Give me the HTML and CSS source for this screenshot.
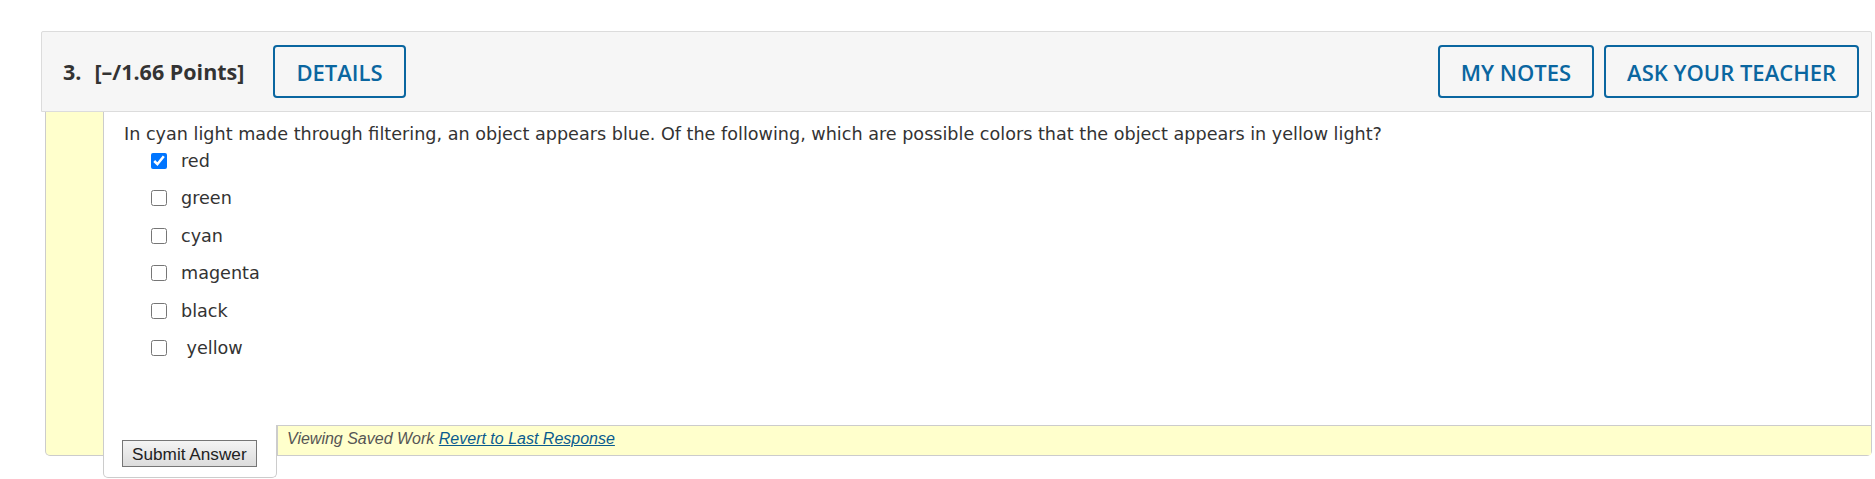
FILE: index.html
```html
<!DOCTYPE html>
<html>
<head>
<meta charset="utf-8">
<link rel="stylesheet" href="styles.css">
</head>
<body>
<div class="question">
  <div class="q-header">
    <div class="q-title"><span class="q-num">3.</span><span class="q-points">[–/1.66 Points]</span></div>
    <button class="hbtn details">DETAILS</button>
    <div class="spacer"></div>
    <button class="hbtn">MY NOTES</button>
    <button class="hbtn">ASK YOUR TEACHER</button>
  </div>
  <div class="q-body">
    <div class="gutter"></div>
    <div class="main">
      <div class="content">
        <p class="prompt">In cyan light made through filtering, an object appears blue. Of the following, which are possible colors that the object appears in yellow light?</p>
        <ul class="choices">
          <li><input type="checkbox" checked><span>red</span></li>
          <li><input type="checkbox"><span>green</span></li>
          <li><input type="checkbox"><span>cyan</span></li>
          <li><input type="checkbox"><span>magenta</span></li>
          <li><input type="checkbox"><span>black</span></li>
          <li><input type="checkbox"><span>&nbsp;yellow</span></li>
        </ul>
      </div>
      <div class="footer">
        <div class="submit-cell"><button class="submit">Submit Answer</button></div>
        <div class="saved-bar"><em>Viewing Saved Work</em> <a href="#">Revert to Last Response</a></div>
      </div>
    </div>
  </div>
</div>
</body>
</html>
```
FILE: styles.css
```css
html, body { margin: 0; padding: 0; background: #fff; }
body { padding: 31px 3px 40px 41px; min-height: 479px; box-sizing: border-box; }
.question { width: 1831px; }
.q-header {
  box-sizing: border-box;
  height: 81px;
  background: #f6f6f6;
  border: 1px solid #dcdcdc;
  border-radius: 2px 2px 0 0;
  display: flex;
  align-items: center;
  padding: 0 12px 0 21px;
  font-family: "Open Sans", sans-serif;
}
.q-title { font-size: 21.5px; font-weight: 700; color: #333; display: flex; gap: 13px; }
.spacer { flex: 1; }
.hbtn {
  box-sizing: border-box;
  height: 53px;
  padding: 0 21px;
  background: #f6f6f6;
  border: 2px solid #0a66a0;
  border-radius: 4px;
  color: #0a66a0;
  font-family: "Open Sans", sans-serif;
  font-size: 22px;
  font-weight: 600;
  margin-left: 10px;
}
.details { margin-left: 29px; }
.q-body {
  margin-left: 4px;
  display: flex;
  background: #ffffcc;
  border: 1px solid #cccccc;
  border-top: none;
  border-radius: 0 0 5px 5px;
  height: 344px;
  box-sizing: border-box;
}
.gutter { width: 57px; flex: none; }
.main { flex: 1; display: flex; flex-direction: column; }
.content {
  flex: 1;
  background: #fff;
  border-left: 1px solid #cccccc;
  padding: 11px 20px 0 20px;
  font-family: "DejaVu Sans", Verdana, sans-serif;
  font-size: 17.6px;
  color: #333;
}
.prompt { margin: 0; line-height: 22px; }
.choices { list-style: none; margin: 0; padding: 0 0 0 27px; }
.choices li { display: flex; align-items: center; height: 37.5px; }
.choices li:first-child { margin-top: -3px; }
.choices input { width: 16px; height: 16px; margin: 0 14px 0 0; }
.footer { display: flex; align-items: flex-start; height: 30px; flex: none; }
.submit-cell {
  box-sizing: border-box;
  width: 174px;
  height: 53px;
  flex: none;
  background: #fff;
  border: 1px solid #cccccc;
  border-top: none;
  border-radius: 0 0 5px 5px;
  padding: 15px 0 0 18px;
}
.submit {
  font-family: "Liberation Sans", Arial, sans-serif;
  font-size: 17.2px;
  line-height: 20px;
  color: #222;
  padding: 2px 9px;
  height: 27px;
  border: 1px solid #767676;
  background: linear-gradient(#f4f4f4, #dcdcdc);
  border-radius: 0;
}
.saved-bar {
  flex: 1;
  box-sizing: border-box;
  height: 30px;
  background: #ffffcc;
  border-top: 1px solid #cccccc;
  border-left: 1px solid #cccccc;
  padding: 4px 0 0 9px;
  font-family: "Liberation Sans", Arial, sans-serif;
  font-size: 16px;
  font-style: italic;
  color: #555;
}
.saved-bar em { font-style: italic; }
.saved-bar a { color: #0a5b8f; }
```
